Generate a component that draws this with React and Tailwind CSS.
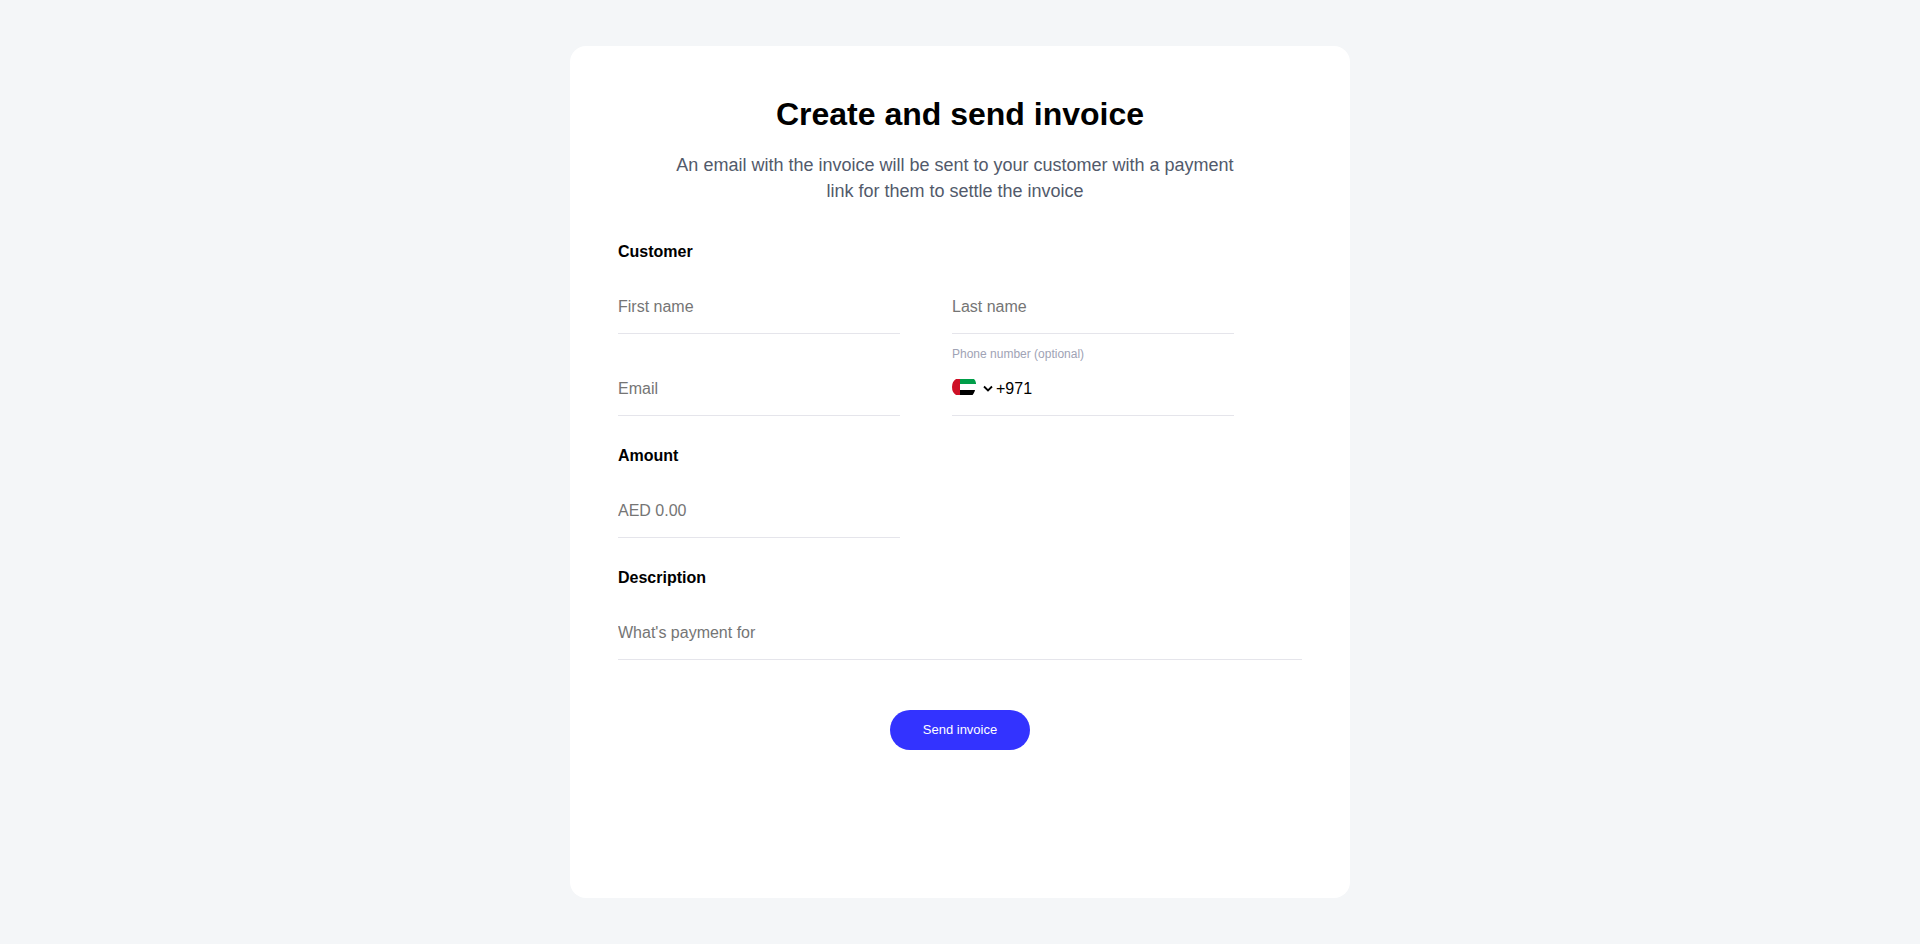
function Field({ id, label, type = "text", placeholder }) {
  return (
    <div className="flex flex-col pt-4">
      <input
        id={id}
        name={id}
        type={type}
        aria-label={label}
        placeholder={placeholder}
        className="h-[54px] w-full border-b border-[#e5e5eb] bg-transparent text-base text-black outline-none placeholder:text-[#757575]"
      />
    </div>
  );
}

function UaeFlag() {
  return (
    <svg viewBox="0 0 24 16" className="h-4 w-6" aria-hidden="true">
      <defs>
        <clipPath id="flag-shape">
          <path d="M4 0H22Q23.6 1.4 24 4V6Q23.4 12.5 20.6 16H4Q0 13.5 0 8Q0 2.5 4 0Z" />
        </clipPath>
      </defs>
      <g clipPath="url(#flag-shape)">
        <rect width="24" height="16" fill="#fff" />
        <rect x="8" width="16" height="5" fill="#009e49" />
        <rect x="8" y="11" width="16" height="5" fill="#000" />
        <rect width="8" height="16" fill="#ce1126" />
      </g>
    </svg>
  );
}

function PhoneField() {
  return (
    <div className="flex flex-col">
      <label htmlFor="phone" className="text-xs text-[#a0a3b5]">
        Phone number (optional)
      </label>
      <div className="flex h-[54px] items-center border-b border-[#e5e5eb]">
        <div className="relative flex items-center gap-[7px] pb-1">
          <UaeFlag />
          <svg viewBox="0 0 10 8" className="mt-1 h-2 w-[10px]" fill="none" stroke="#000" strokeWidth="1.8" aria-hidden="true">
            <path d="M1 1.5L5 5.5L9 1.5" />
          </svg>
          <select aria-label="Country code" defaultValue="AE" className="absolute inset-0 w-full cursor-pointer opacity-0">
            <option value="AE">+971</option>
          </select>
        </div>
        <input
          id="phone"
          name="phone"
          type="tel"
          defaultValue="+971"
          className="ml-[3px] h-full min-w-0 flex-1 bg-transparent text-base text-black outline-none"
        />
      </div>
    </div>
  );
}

function SectionTitle({ children }) {
  return <h2 className="text-base font-bold">{children}</h2>;
}

export default function App() {
  return (
    <main className="flex min-h-screen flex-col items-center bg-[#f4f6f8] py-[46px] font-['Liberation_Sans',Arial,sans-serif] text-black">
      <form
        className="flex w-full max-w-[780px] flex-1 flex-col rounded-2xl bg-white p-12"
        onSubmit={(event) => event.preventDefault()}
      >
        <h1 className="text-center text-[32px] leading-10 font-bold">Create and send invoice</h1>
        <p className="mt-[18px] mr-[10px] px-12 text-center text-lg leading-[26px] text-[#525a6b]">
          An email with the invoice will be sent to your customer with a payment link for them to settle the invoice
        </p>

        <section className="mt-9">
          <SectionTitle>Customer</SectionTitle>
          <div className="mr-[68px] grid grid-cols-2 gap-x-[52px] gap-y-3">
            <Field id="first-name" label="First name" placeholder="First name" />
            <Field id="last-name" label="Last name" placeholder="Last name" />
            <Field id="email" label="Email" type="email" placeholder="Email" />
            <PhoneField />
          </div>
        </section>

        <section className="mt-7">
          <SectionTitle>Amount</SectionTitle>
          <div className="mr-[68px] grid grid-cols-2 gap-x-[52px]">
            <Field id="amount" label="Amount" placeholder="AED 0.00" />
          </div>
        </section>

        <section className="mt-7">
          <SectionTitle>Description</SectionTitle>
          <Field id="description" label="Description" placeholder="What's payment for" />
        </section>

        <button type="submit" className="mt-[50px] h-10 min-w-[140px] self-center rounded-full bg-[#3333ff] px-8 text-[13px] text-white">
          Send invoice
        </button>
      </form>
    </main>
  );
}
